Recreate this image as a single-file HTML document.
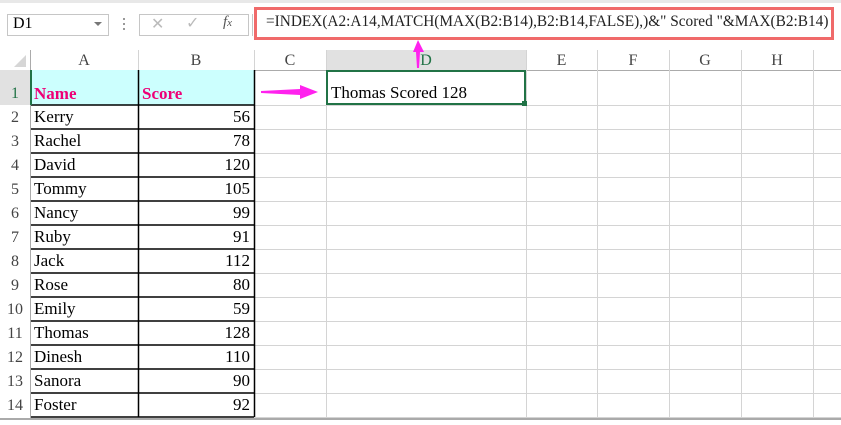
<!DOCTYPE html><html><head><style>
body{margin:0;width:841px;height:425px;background:#fff;position:relative;overflow:hidden;font-family:"Liberation Serif",serif}
.a{position:absolute}
.t{position:absolute;font-size:17px;color:#000;white-space:nowrap}
.h{position:absolute;font-size:16px;color:#444;text-align:center}
</style></head><body>
<div class="a" style="left:0;top:0;width:841px;height:3px;background:#e8e8e8"></div>
<div class="a" style="left:7px;top:14px;width:100px;height:20px;border:1px solid #c6c6c6"></div>
<div class="t" style="left:13px;top:15px;font-size:16px">D1</div>
<div class="a" style="left:94px;top:22px;border-left:4px solid transparent;border-right:4px solid transparent;border-top:4px solid #777"></div>
<div class="a" style="left:123px;top:18px;width:2px;height:2px;background:#999;box-shadow:0 5px #999,0 10px #999"></div>
<div class="a" style="left:139px;top:14px;width:108px;height:20px;border:1px solid #c6c6c6"></div>
<div class="t" style="left:151px;top:14px;color:#bbb;font-family:'Liberation Sans';font-size:16px">✕</div>
<div class="t" style="left:186px;top:13px;color:#bbb;font-family:'DejaVu Sans';font-size:16px">✓</div>
<div class="t" style="left:223px;top:14px;color:#555;font-style:italic;font-size:15px">f<span style="font-size:11px">x</span></div>
<div class="a" style="left:252px;top:14px;width:1px;height:22px;background:#c6c6c6"></div>
<div class="a" style="left:254px;top:7px;width:574px;height:27px;border:3px solid #f06a6a"></div>
<div class="t" style="left:266px;top:13px;font-size:16px;color:#222;transform:scaleX(0.958);transform-origin:left">=INDEX(A2:A14,MATCH(MAX(B2:B14),B2:B14,FALSE),)&amp;" Scored "&amp;MAX(B2:B14)</div>
<div class="a" style="left:0;top:50px;width:841px;height:20px;background:#fff;border-bottom:1px solid #ababab"></div>
<div class="a" style="left:326px;top:50px;width:200px;height:20px;background:#e1e1e1"></div>
<div class="a" style="left:14px;top:55px;border-left:12px solid transparent;border-bottom:12px solid #d6d6d6"></div>
<div class="a" style="left:0;top:70px;width:30px;height:35px;background:#e1e1e1"></div>
<div class="a" style="left:30px;top:50px;width:1px;height:375px;background:#ababab"></div>
<svg class="a" style="left:0;top:0" width="841" height="425">
<g stroke="#d4d4d4" stroke-width="1">
<line x1="138.5" y1="50" x2="138.5" y2="70"/><line x1="254.5" y1="50" x2="254.5" y2="420"/><line x1="326.5" y1="50" x2="326.5" y2="420"/><line x1="526.5" y1="50" x2="526.5" y2="420"/><line x1="597.5" y1="50" x2="597.5" y2="420"/><line x1="669.5" y1="50" x2="669.5" y2="420"/><line x1="741.5" y1="50" x2="741.5" y2="420"/><line x1="813.5" y1="50" x2="813.5" y2="420"/>
<line x1="254" y1="105.5" x2="841" y2="105.5"/>
<line x1="254" y1="129.5" x2="841" y2="129.5"/><line x1="254" y1="153.5" x2="841" y2="153.5"/><line x1="254" y1="177.5" x2="841" y2="177.5"/><line x1="254" y1="201.5" x2="841" y2="201.5"/><line x1="254" y1="225.5" x2="841" y2="225.5"/><line x1="254" y1="249.5" x2="841" y2="249.5"/><line x1="254" y1="273.5" x2="841" y2="273.5"/><line x1="254" y1="297.5" x2="841" y2="297.5"/><line x1="254" y1="321.5" x2="841" y2="321.5"/><line x1="254" y1="345.5" x2="841" y2="345.5"/><line x1="254" y1="369.5" x2="841" y2="369.5"/><line x1="254" y1="393.5" x2="841" y2="393.5"/><line x1="254" y1="417.5" x2="841" y2="417.5"/>
</g>
<rect x="31" y="70" width="223" height="35" fill="#ccfffe"/>
<g stroke="#000" stroke-width="1.5">
<line x1="31" y1="105" x2="254" y2="105"/><line x1="31" y1="129" x2="254" y2="129"/><line x1="31" y1="153" x2="254" y2="153"/><line x1="31" y1="177" x2="254" y2="177"/><line x1="31" y1="201" x2="254" y2="201"/><line x1="31" y1="225" x2="254" y2="225"/><line x1="31" y1="249" x2="254" y2="249"/><line x1="31" y1="273" x2="254" y2="273"/><line x1="31" y1="297" x2="254" y2="297"/><line x1="31" y1="321" x2="254" y2="321"/><line x1="31" y1="345" x2="254" y2="345"/><line x1="31" y1="369" x2="254" y2="369"/><line x1="31" y1="393" x2="254" y2="393"/><line x1="31" y1="417" x2="254" y2="417"/>
<line x1="138.5" y1="70" x2="138.5" y2="417"/><line x1="254.5" y1="70" x2="254.5" y2="417"/>
</g>
<line x1="31" y1="70" x2="31" y2="105" stroke="#217346" stroke-width="2"/>
<rect x="327" y="71" width="198" height="33" fill="none" stroke="#217346" stroke-width="2"/>
<rect x="522" y="101" width="5" height="5" fill="#217346"/>
<g fill="#ff22ee"><polygon points="261,91 300,89 300,85 318,92 300,99 300,95 261,93"/><polygon points="417,68 419,68 420,52 424,52 418,40 413,52 416,52"/></g>
<rect x="0" y="418" width="841" height="7" fill="#fff"/><line x1="0" y1="419" x2="841" y2="419" stroke="#aaa" stroke-width="2"/>
</svg>
<div class="h" style="left:30px;top:52px;width:108px">A</div><div class="h" style="left:138px;top:52px;width:116px">B</div><div class="h" style="left:254px;top:52px;width:72px">C</div><div class="h" style="left:326px;top:52px;width:200px;color:#217346">D</div><div class="h" style="left:526px;top:52px;width:71px">E</div><div class="h" style="left:597px;top:52px;width:72px">F</div><div class="h" style="left:669px;top:52px;width:72px">G</div><div class="h" style="left:741px;top:52px;width:72px">H</div>
<div class="h" style="left:0;top:85px;width:30px;color:#217346">1</div>
<div class="t" style="left:34px;top:84px;color:#ee0077;font-weight:bold">Name</div>
<div class="t" style="left:142px;top:84px;color:#ee0077;font-weight:bold">Score</div>
<div class="t" style="left:331px;top:83px">Thomas Scored 128</div>
<div id="rows"></div>
<script>
var d=[["Kerry",56],["Rachel",78],["David",120],["Tommy",105],["Nancy",99],["Ruby",91],["Jack",112],["Rose",80],["Emily",59],["Thomas",128],["Dinesh",110],["Sanora",90],["Foster",92]],h="";
d.forEach(function(r,i){var y=105+i*24;h+='<div class="h" style="left:0;top:'+(y+4)+'px;width:30px">'+(i+2)+'</div><div class="t" style="left:34px;top:'+(y+2)+'px">'+r[0]+'</div><div class="t" style="left:138px;top:'+(y+2)+'px;width:112px;text-align:right">'+r[1]+'</div>';});
document.getElementById("rows").innerHTML=h;
</script>
</body></html>
